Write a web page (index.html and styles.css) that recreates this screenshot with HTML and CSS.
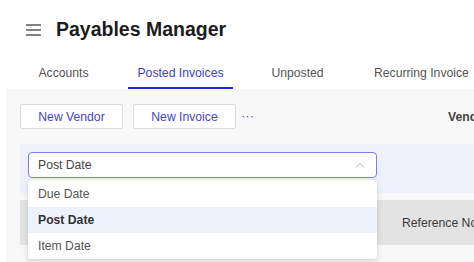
FILE: index.html
```
<!DOCTYPE html>
<html>
<head>
<meta charset="utf-8">
<link rel="stylesheet" href="styles.css">
</head>
<body>
<div class="app">
  <header class="header">
    <svg class="menu-icon" width="16" height="14" viewBox="0 0 16 14"><path d="M0 2h15M0 7h15M0 12h15" stroke="#5a5a5a" stroke-width="1.6"/></svg>
    <h1 class="title">Payables Manager</h1>
  </header>
  <nav class="tabs">
    <div class="tab">Accounts</div>
    <div class="tab active">Posted Invoices</div>
    <div class="tab">Unposted</div>
    <div class="tab last">Recurring Invoice</div>
  </nav>
  <main class="content">
    <div class="toolbar">
      <button class="btn">New Vendor</button>
      <button class="btn">New Invoice</button>
      <span class="more">···</span>
      <span class="vendor">Vendor</span>
    </div>
    <div class="filter">
      <div class="select">
        <span>Post Date</span>
        <svg class="chev" width="10" height="6" viewBox="0 0 10 6"><path d="M1 5.5L5 1.5L9 5.5" fill="none" stroke="#b0b0b0" stroke-width="1"/></svg>
      </div>
    </div>
    <div class="table-head">
      <span class="col-ref">Reference No</span>
    </div>
    <ul class="dropdown">
      <li class="opt">Due Date</li>
      <li class="opt selected">Post Date</li>
      <li class="opt">Item Date</li>
    </ul>
  </main>
</div>
</body>
</html>
```
FILE: styles.css
```
* { box-sizing: border-box; }
html, body { margin: 0; padding: 0; background: #fff; }
body { font-family: "Liberation Sans", Arial, sans-serif; width: 474px; height: 262px; overflow: hidden; }
.header { display: flex; align-items: center; height: 58px; padding-left: 26px; }
.menu-icon { display: block; margin-right: 14px; margin-top: 1px; }
.title { margin: 0; font-size: 19.5px; font-weight: bold; color: #1c1c1c; }
.tabs { display: flex; height: 31px; padding-left: 5px; }
.tab { width: 117px; text-align: center; font-size: 12.2px; color: #555; padding-top: 8px; position: relative; white-space: nowrap; }
.tab.last { width: 118px; padding-left: 18px; text-align: left; }
.tab.active { color: #3d3dd6; }
.tab.active::after { content: ""; position: absolute; left: 6px; right: 6px; bottom: 0; height: 2px; background: #2323e0; }
.content { position: relative; margin-left: 6px; background: #f8f8f8; height: 173px; padding-top: 15px; }
.toolbar { display: flex; align-items: center; padding-left: 14px; height: 25px; }
.btn { font-family: inherit; font-size: 12.2px; color: #4646c8; background: #fff; border: 1px solid #dcdcdc; border-radius: 2px; height: 25px; width: 103px; padding: 0; margin-right: 10px; }
.more { color: #5a5ad8; font-size: 13px; margin-left: -5px; position: relative; top: -1px; }
.vendor { margin-left: auto; font-size: 12.2px; font-weight: bold; color: #444; width: 26px; overflow: hidden; white-space: nowrap; }
.filter { margin: 15px 0 0 14px; height: 49px; background: #eef0fb; padding: 8px 0 0 8px; }
.select { width: 349px; height: 26px; border: 1px solid #7d7de6; border-radius: 4px; background: #fff; display: flex; align-items: center; justify-content: space-between; padding: 0 11px 0 9px; font-size: 12.2px; color: #444; }
.chev { display: block; }
.table-head { margin: 7px 0 0 14px; height: 45px; background: #e3e3e3; display: flex; align-items: center; padding-left: 382px; font-size: 12.2px; color: #3a3a3a; white-space: nowrap; overflow: hidden; }
.dropdown { position: absolute; left: 22px; top: 91px; width: 349px; margin: 0; padding: 1px 0 0; list-style: none; background: #fff; border-radius: 3px; box-shadow: 0 3px 6px rgba(0,0,0,0.12), 0 0 2px rgba(0,0,0,0.08); }
.opt { height: 26px; line-height: 26px; padding-left: 10px; font-size: 12.2px; color: #555; }
.opt.selected { background: #eef2fc; color: #333; font-weight: bold; }
```
